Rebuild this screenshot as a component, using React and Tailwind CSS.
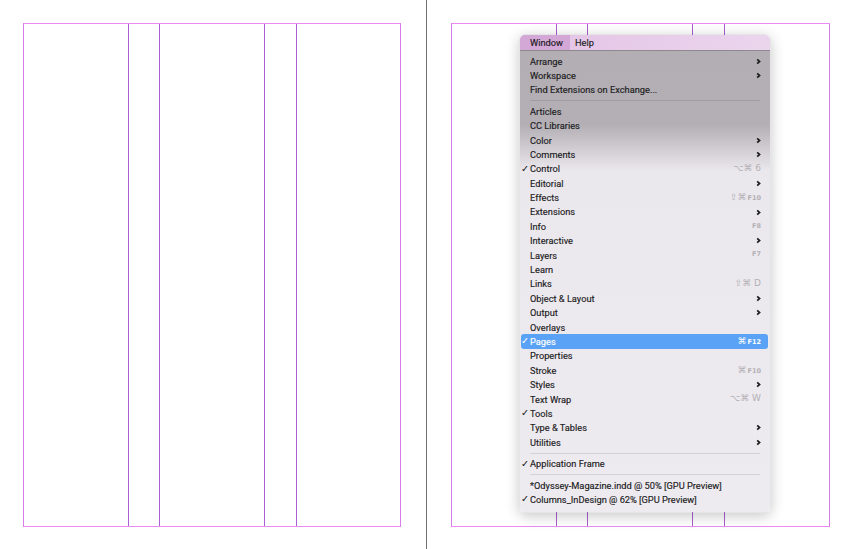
import React from "react";

const FONT = { fontFamily: 'Roboto, "Liberation Sans", "DejaVu Sans", sans-serif' };

// column widths between guide lines (first one has no left line)
const Page = ({ cols }) => (
  <div className="h-full w-full border border-[#d77ce9] border-t-[#ea8cf3] border-b-[#ea8cf3] flex">
    {cols.map((w, i) => (
      <div
        key={i}
        className={i === 0 ? "h-full" : "h-full border-l border-[#ac5fd2]"}
        style={{ width: w }}
      />
    ))}
    <div className="h-full flex-1 border-l border-[#ac5fd2]" />
  </div>
);

const Chevron = ({ light }) => (
  <svg width="5" height="7" viewBox="0 0 5 7" className="block">
    <path
      d="M1.2 1.3 L3.6 3.5 L1.2 5.7"
      fill="none"
      stroke={light ? "#fff" : "#1e1e1e"}
      strokeWidth="1.7"
    />
  </svg>
);

const Key = ({ k, fn, active }) => (
  <span
    className={
      active
        ? "flex items-baseline gap-[1px] text-white text-[9px]"
        : "flex items-baseline gap-[1px] text-[#b3afb5] text-[9px]"
    }
    style={{ fontFamily: '"DejaVu Sans", sans-serif' }}
  >
    {k && <span>{k}</span>}
    {fn && <span className="text-[6.5px] font-bold">{fn}</span>}
  </span>
);

const items = [
  { t: "Arrange", sub: true },
  { t: "Workspace", sub: true },
  { t: "Find Extensions on Exchange..." },
  "sep",
  { t: "Articles" },
  { t: "CC Libraries" },
  { t: "Color", sub: true },
  { t: "Comments", sub: true },
  { t: "Control", check: true, k: "⌥⌘ 6" },
  { t: "Editorial", sub: true },
  { t: "Effects", k: "⇧⌘", fn: "F10" },
  { t: "Extensions", sub: true },
  { t: "Info", fn: "F8" },
  { t: "Interactive", sub: true },
  { t: "Layers", fn: "F7" },
  { t: "Learn" },
  { t: "Links", k: "⇧⌘ D" },
  { t: "Object & Layout", sub: true },
  { t: "Output", sub: true },
  { t: "Overlays" },
  { t: "Pages", check: true, active: true, k: "⌘", fn: "F12" },
  { t: "Properties" },
  { t: "Stroke", k: "⌘", fn: "F10" },
  { t: "Styles", sub: true },
  { t: "Text Wrap", k: "⌥⌘ W" },
  { t: "Tools", check: true },
  { t: "Type & Tables", sub: true },
  { t: "Utilities", sub: true },
  "sep",
  { t: "Application Frame", check: true },
  "sep",
  { t: "*Odyssey-Magazine.indd @ 50% [GPU Preview]" },
  { t: "Columns_InDesign @ 62% [GPU Preview]", check: true },
];

const Row = ({ it }) => (
  <div
    className={
      it.active
        ? "relative h-[14.4px] ml-[1px] mr-[2px] pl-[9px] pr-[7px] flex items-center justify-between rounded-[3px] bg-[#5aa2f6] text-white"
        : "relative h-[14.4px] ml-[1px] mr-[2px] pl-[9px] pr-[7px] flex items-center justify-between text-[#1c1b1d]"
    }
  >
    {it.check && (
      <span
        className="absolute left-[0px] top-0 h-full flex items-center text-[9.5px] font-bold"
        style={{ fontFamily: '"DejaVu Sans", sans-serif' }}
      >
        ✓
      </span>
    )}
    <span className="text-[9.25px] leading-none whitespace-nowrap [-webkit-text-stroke:0.15px_currentColor]">
      {it.t}
    </span>
    {it.sub && <Chevron light={it.active} />}
    {(it.k || it.fn) && <Key k={it.k} fn={it.fn} active={it.active} />}
  </div>
);

const Menu = () => (
  <div
    className="absolute left-[92px] top-[34px] w-[252px] rounded-[6px] overflow-hidden shadow-[0_3px_14px_rgba(0,0,0,0.22)] border border-black/10"
    style={FONT}
  >
    <div className="h-[15px] bg-[linear-gradient(to_right,#e3c3e5,#ebd5ed)] flex items-center text-[9.25px] text-[#1c1b1d] [-webkit-text-stroke:0.15px_currentColor]">
      <div className="h-full w-[50px] bg-[#d3a7d6] flex items-center pl-[10px]">Window</div>
      <div className="pl-[5px]">Help</div>
    </div>
    <div className="h-px bg-[#8d898f]" />
    <div className="pt-[3px] pb-[5px] bg-[linear-gradient(to_bottom,#b2aeb3_0%,#b3afb4_16%,#ebe8ed_26%,#eeebf0_100%)]">
      {items.map((it, i) =>
        it === "sep" ? (
          <div key={i} className="h-[7px] flex items-center px-[10px]">
            <div className="h-px w-full bg-black/10" />
          </div>
        ) : (
          <Row key={i} it={it} />
        )
      )}
    </div>
  </div>
);

export default function App() {
  return (
    <div className="w-[850px] h-[549px] bg-white flex overflow-hidden">
      <div className="w-[426px] h-full pl-[23px] pt-[23px] pb-[22px] pr-[25px]">
        <Page cols={[104, 31, 105, 32]} />
      </div>
      <div className="w-px h-full bg-[#707070]" />
      <div className="flex-1 h-full pl-[24px] pt-[23px] pb-[22px] pr-[20px] relative">
        <Page cols={[104, 31, 105, 32]} />
        <Menu />
      </div>
    </div>
  );
}
